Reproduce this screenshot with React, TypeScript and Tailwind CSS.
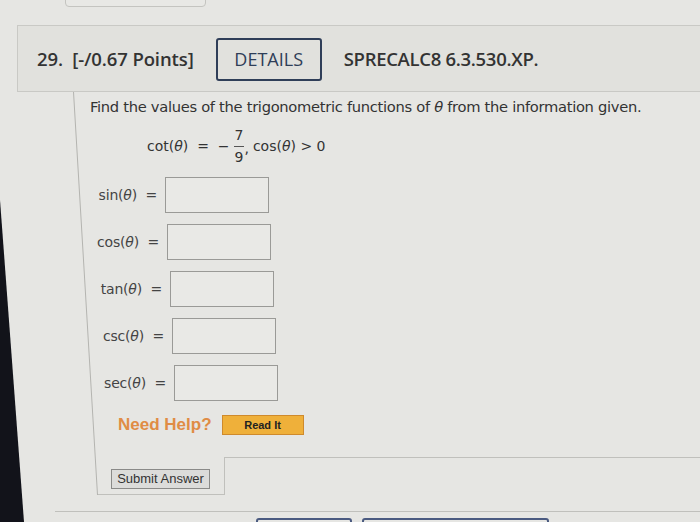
import React from "react";

const rows = [
  { fn: "sin", ml: "ml-[0px]" },
  { fn: "cos", ml: "ml-[2px]" },
  { fn: "tan", ml: "ml-[5px]" },
  { fn: "csc", ml: "ml-[7px]" },
  { fn: "sec", ml: "ml-[9px]" },
];

export default function App() {
  return (
    <div className="relative w-[700px] h-[522px] overflow-hidden bg-[#e6e6e3] text-[#333]" style={{ fontFamily: "'DejaVu Sans', Verdana, sans-serif" }}>
      {/* previous element bottom */}
      <div className="absolute left-[65px] top-[-10px] w-[141px] h-[17px] border border-[#c4c4c0] rounded-b-[4px] bg-[#e8e8e5]" />

      {/* header */}
      <div className="mt-[25px] ml-[17px] mr-[-10px] h-[67px] border border-[#c9c9c5] bg-[#e1e1dd] flex items-center pl-[19px] pt-[1px]" style={{ fontFamily: "'Open Sans', sans-serif" }}>
        <span className="text-[18.5px] font-semibold tracking-[-0.1px] text-[#333]">29.&nbsp; [-/0.67 Points]</span>
        <div className="ml-[22px] w-[106px] h-[43px] border-2 border-[#2f3e58] rounded-[3px] flex items-center justify-center text-[18px] text-[#2f3e58]">DETAILS</div>
        <span className="ml-[22px] text-[18.5px] font-semibold tracking-[-0.3px] text-[#333]">SPRECALC8 6.3.530.XP.</span>
      </div>

      {/* content */}
      <div className="ml-[73px] h-[404px] relative">
        <div className="pl-[17px] pt-[5px] text-[14.7px] tracking-[-0.3px] leading-[20px]">
          Find the values of the trigonometric functions of <i>θ</i> from the information given.
        </div>
        <div className="pl-[74px] mt-[9px] flex items-center text-[14px] h-[40px]">
          <span>cot(<i>θ</i>) &nbsp;=&nbsp; −</span>
          <span className="inline-flex flex-col items-center mx-[4px] leading-[17px] text-[14px]">
            <span className="px-[1px] pb-[2px] border-b border-[#555]">7</span>
            <span className="pt-[2px]">9</span>
          </span>
          <span className="-ml-[4px] mt-[4px]">,</span>
          <span className="ml-[4px]">cos(<i>θ</i>) &gt; 0</span>
        </div>

        <div className="flex flex-col gap-[11px] mt-[11px] pl-[21px]">
          {rows.map((r) => (
            <div key={r.fn} className={`flex items-center ${r.ml}`}>
              <span className="w-[63px] text-right text-[14px] tracking-[-0.2px] text-[#444]">
                {r.fn}(<i>θ</i>) &nbsp;=
              </span>
              <div className="ml-[8px] w-[104px] h-[36px] border border-[#9a9a97] bg-[#e9e9e6]" />
            </div>
          ))}
        </div>

        <div className="flex items-center mt-[11px] pl-[45px]">
          <span className="text-[17px] font-bold text-[#e08c45]" style={{ fontFamily: "'Liberation Sans', Arial, sans-serif" }}>Need Help?</span>
          <div className="ml-[10px] w-[82px] h-[20px] border border-[#cf8a2c] bg-[#efb03a] flex items-center justify-center text-[11px] font-bold text-[#222]" style={{ fontFamily: "'Liberation Sans', Arial, sans-serif" }}>Read It</div>
        </div>
      </div>

      {/* lower frame lines */}
      <div className="absolute left-[224px] top-[457px] right-0 h-[38px] border-t border-l border-[#c0c0bc]" />
      <div className="absolute left-[97px] top-[494px] w-[128px] border-t border-[#c0c0bc]" />
      <div className="absolute left-[111px] top-[469px] w-[99px] h-[20px] border border-[#8a8a88] bg-[#dcdcda] flex items-center justify-center text-[13px] text-[#333]" style={{ fontFamily: "'Liberation Sans', Arial, sans-serif" }}>Submit Answer</div>
      <div className="absolute left-[55px] top-[511px] right-0 border-t border-[#c0c0bc]" />
      <div className="absolute left-[256px] top-[518px] w-[96px] h-[12px] border-2 border-[#4a5a80] rounded-[3px]" />
      <div className="absolute left-[362px] top-[518px] w-[187px] h-[12px] border-2 border-[#4a5a80] rounded-[3px]" />

      {/* slanted panel edge (photo perspective) */}
      <svg className="absolute left-0 top-0 pointer-events-none" width="110" height="522">
        <line x1="73.5" y1="92" x2="97.5" y2="495" stroke="#b4b4b0" strokeWidth="1" />
      </svg>

      {/* screen bezel */}
      <svg className="absolute left-0 top-0" width="30" height="522">
        <polygon points="0,200 24,522 0,522" fill="#12131a" />
      </svg>
    </div>
  );
}
